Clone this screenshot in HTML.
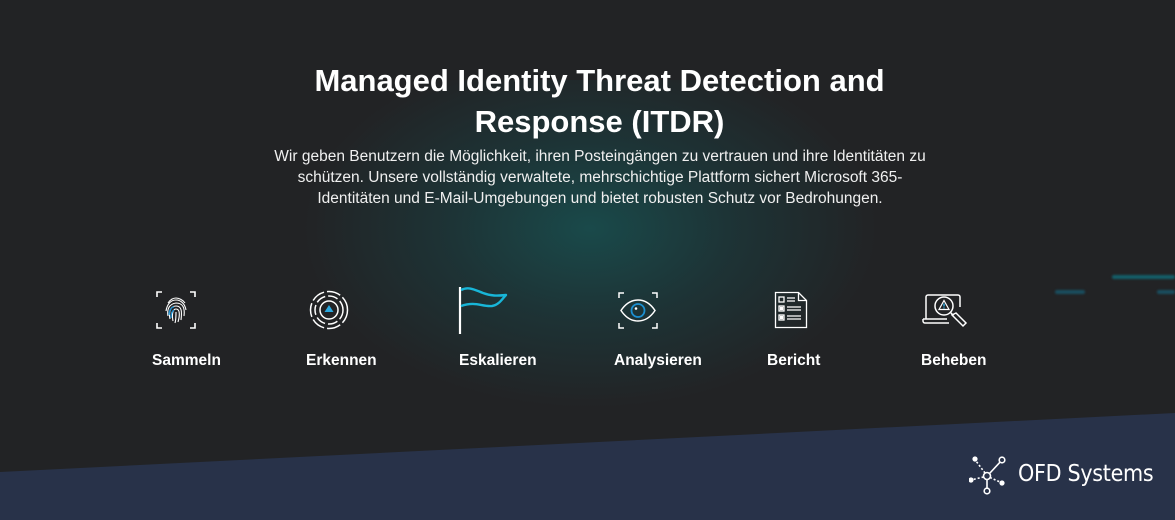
<!DOCTYPE html>
<html><head><meta charset="utf-8"><style>
*{margin:0;padding:0;box-sizing:border-box}
body{width:1175px;height:520px;overflow:hidden;background:#222325;font-family:"Liberation Sans",sans-serif;position:relative;color:#fff}
.glow{position:absolute;left:300px;top:80px;width:580px;height:330px;background:radial-gradient(ellipse at 50% 45%,rgba(22,90,90,0.7) 0%,rgba(22,75,78,0.4) 35%,rgba(34,35,37,0) 70%)}
h1{position:absolute;top:60px;left:12px;width:1175px;text-align:center;font-size:31px;line-height:41px;font-weight:bold}
p{position:absolute;top:146px;left:200px;width:800px;text-align:center;font-size:15.5px;line-height:21px;color:#f0f0f0;white-space:nowrap}
.it{position:absolute;top:352px;font-weight:bold;font-size:15.5px}
svg{position:absolute}
.band{position:absolute;left:0;top:0}
.dash{position:absolute;height:4px;background:#145f6a;border-radius:2px;filter:blur(1px)}
</style></head><body>
<div class="glow"></div>
<div class="dash" style="left:1112px;top:275px;width:63px"></div>
<div class="dash" style="left:1055px;top:290px;width:30px;background:#1a4f60"></div>
<div class="dash" style="left:1157px;top:290px;width:18px;background:#1a4f60"></div>
<h1>Managed Identity Threat Detection and<br>Response (ITDR)</h1>
<p>Wir geben Benutzern die Möglichkeit, ihren Posteingängen zu vertrauen und ihre Identitäten zu<br>schützen. Unsere vollständig verwaltete, mehrschichtige Plattform sichert Microsoft 365-<br>Identitäten und E-Mail-Umgebungen und bietet robusten Schutz vor Bedrohungen.</p>

<svg style="left:156px;top:291px" width="40" height="38" viewBox="0 0 40 38" fill="none" stroke="#fff" stroke-width="1.6">
<path d="M1 6V1h5M34 1h5v5M39 32v5h-5M6 37H1v-5"/>
<g stroke-width="1.1">
<path d="M12 25c-1-5 0-12 8-13 7 0 9 5 8 13"/>
<path d="M14 28c-1-4-1-13 6-13 6 0 6 6 5 14"/>
<path d="M17 30c-1-5-1-12 3-12s4 6 2 13"/>
<path d="M10 20c1-7 5-11 10-11s9 4 10 10"/>
<path d="M12 12c2-3 5-5 8-5s7 2 9 5"/>
<path d="M20 21c0 4 0 8-1 11"/>
</g>
<path d="M13 24c0-4 2-8 5-8M15 27c0-4 1-7 3-8" stroke="#1c8fd0" stroke-width="1.3"/>
</svg>
<div class="it" style="left:152px">Sammeln</div>

<svg style="left:309px;top:290px" width="40" height="40" viewBox="0 0 40 40" fill="none" stroke="#fff" stroke-width="1.5">
<circle cx="20" cy="20" r="18.5" stroke-dasharray="14 3"/>
<circle cx="20" cy="20" r="14" stroke-dasharray="10 3"/>
<circle cx="20" cy="20" r="9"/>
<path d="M20 15l4.5 7h-9z" fill="#2aa9e0" stroke="none"/>
</svg>
<div class="it" style="left:306px">Erkennen</div>

<svg style="left:457px;top:285px" width="52" height="50" viewBox="0 0 52 50" fill="none">
<path d="M3 2v47" stroke="#fff" stroke-width="2.2"/>
<path d="M4 5c8-4 14 0 22 3 8 3 14 3 23 2-4 4-7 10-14 11-10 1-16-5-31 0" stroke="#18b6d8" stroke-width="2.4" stroke-linejoin="round"/>
</svg>
<div class="it" style="left:459px">Eskalieren</div>

<svg style="left:618px;top:292px" width="40" height="37" viewBox="0 0 40 37" fill="none" stroke="#fff" stroke-width="1.5">
<path d="M1 6V1h5M34 1h5v5M39 31v5h-5M6 36H1v-5"/>
<path d="M3 18.5C8 11 14 8 20 8s12 3 17 10.5C32 26 26 29 20 29S8 26 3 18.5z"/>
<circle cx="20" cy="18.5" r="6.5" stroke="#1c8fd0" stroke-width="1.8"/>
<circle cx="18" cy="16.5" r="1.3" fill="#fff" stroke="none"/>
</svg>
<div class="it" style="left:614px">Analysieren</div>

<svg style="left:774px;top:291px" width="34" height="38" viewBox="0 0 34 38" fill="none" stroke="#fff" stroke-width="1.3">
<path d="M1.5 1.5h23l8 8v27h-31z"/><path d="M24.5 1.5v8h8"/>
<rect x="5" y="6" width="5" height="5"/><path d="M13 7h8M13 10h8"/>
<rect x="5" y="15" width="5" height="5"/><path d="M13 16h14M13 19h14"/>
<rect x="5" y="24" width="5" height="5"/><path d="M13 25h14M13 28h14"/>
<rect x="6.5" y="16.5" width="2" height="2" fill="#fff"/><rect x="6.5" y="25.5" width="2" height="2" fill="#fff"/>
</svg>
<div class="it" style="left:767px">Bericht</div>

<svg style="left:922px;top:292px" width="46" height="36" viewBox="0 0 46 36" fill="none" stroke="#fff" stroke-width="1.5">
<path d="M4 27V5a2 2 0 0 1 2-2h30a2 2 0 0 1 2 2v10"/>
<path d="M1 27h24M1 27v2a2 2 0 0 0 2 2h24"/>
<circle cx="22" cy="14" r="9"/>
<path d="M28.5 20.5l3 3M30 23l4-2 10 10-3 3-10-10z"/>
<path d="M22 8.5l5 9h-10z" stroke-width="1.2"/>
<path d="M22 11.5v3" stroke="#2aa9e0" stroke-width="1.5"/><circle cx="22" cy="16" r=".7" fill="#2aa9e0" stroke="none"/>
</svg>
<div class="it" style="left:921px">Beheben</div>

<svg class="band" width="1175" height="520"><polygon points="0,472 1175,413 1175,520 0,520" fill="#283249"/></svg>

<svg style="left:969px;top:456px" width="40" height="40" viewBox="0 0 40 40" fill="none" stroke="#fff" stroke-width="1.6">
<circle cx="18" cy="20" r="3.5"/>
<circle cx="33" cy="4" r="2.8"/>
<circle cx="18" cy="35" r="2.8"/>
<circle cx="6" cy="3" r="1.8" fill="#fff"/>
<circle cx="2" cy="24" r="1.8" fill="#fff"/>
<circle cx="33" cy="27" r="1.8" fill="#fff"/>
<path d="M20.5 17.5L31 6.2M18 23.5v9"/>
<path d="M16 17L7 5M14.5 21L4 23.5M21 21.5l10 4.5" stroke-dasharray="2 2"/>
</svg>
<div style="position:absolute;left:1018px;top:461px;font-size:23px;color:#fff;font-family:'DejaVu Sans Condensed','Liberation Sans Narrow','Liberation Sans',sans-serif;letter-spacing:-0.3px">OFD Systems</div>
</body></html>
